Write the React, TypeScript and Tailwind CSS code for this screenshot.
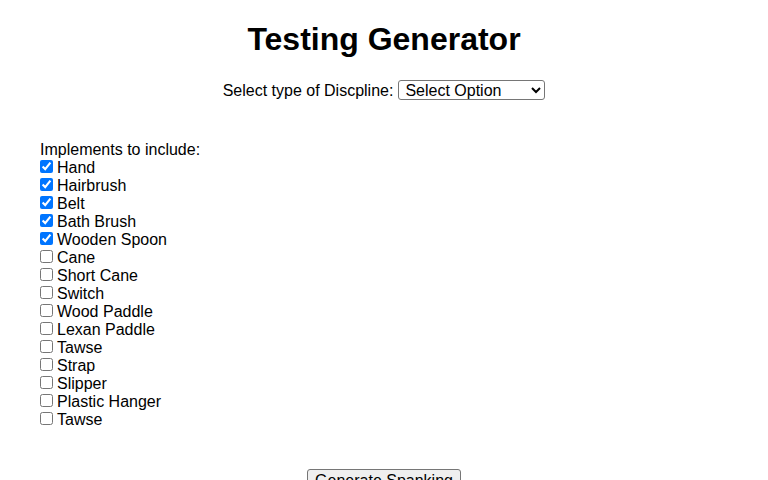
const IMPLEMENTS: { name: string; checked: boolean }[] = [
  { name: "Hand", checked: true },
  { name: "Hairbrush", checked: true },
  { name: "Belt", checked: true },
  { name: "Bath Brush", checked: true },
  { name: "Wooden Spoon", checked: true },
  { name: "Cane", checked: false },
  { name: "Short Cane", checked: false },
  { name: "Switch", checked: false },
  { name: "Wood Paddle", checked: false },
  { name: "Lexan Paddle", checked: false },
  { name: "Tawse", checked: false },
  { name: "Strap", checked: false },
  { name: "Slipper", checked: false },
  { name: "Plastic Hanger", checked: false },
  { name: "Tawse", checked: false },
];

export default function App() {
  return (
    <div className="min-h-screen bg-white text-black text-[16px] font-['Liberation_Sans',Arial,sans-serif]">
      <h1 className="pt-[21px] text-center text-[32px] font-bold leading-[37px]">
        Testing Generator
      </h1>

      {/* discipline picker */}
      <div className="mt-[22px] flex h-[20px] items-center justify-center gap-[5px]">
        <span className="leading-[20px] pt-[2px]">Select type of Discpline:</span>
        <select
          defaultValue=""
          className="h-[20px] w-[147px] rounded-[3px] border border-[#767676] bg-white pl-[2px] text-[16px] leading-[18px]"
        >
          <option value="">Select Option</option>
          <option value="maintenance">Maintenance</option>
          <option value="punishment">Punishment</option>
        </select>
      </div>

      <div className="mt-[41px] pl-10 leading-[18px]">
        <div>Implements to include:</div>
        {IMPLEMENTS.map((imp, i) => (
          <label key={i} className="flex h-[18px] items-start">
            <input
              type="checkbox"
              defaultChecked={imp.checked}
              className="mr-[4px] mt-[1px] h-[13px] w-[13px] accent-[#0075ff]"
            />
            <span>{imp.name}</span>
          </label>
        ))}
      </div>

      <div className="mt-[40px] flex justify-center">
        <button className="rounded-[3px] border border-[#767676] bg-[#efefef] px-[7px] py-[2px] leading-[18px]">
          Generate Spanking
        </button>
      </div>
    </div>
  );
}
